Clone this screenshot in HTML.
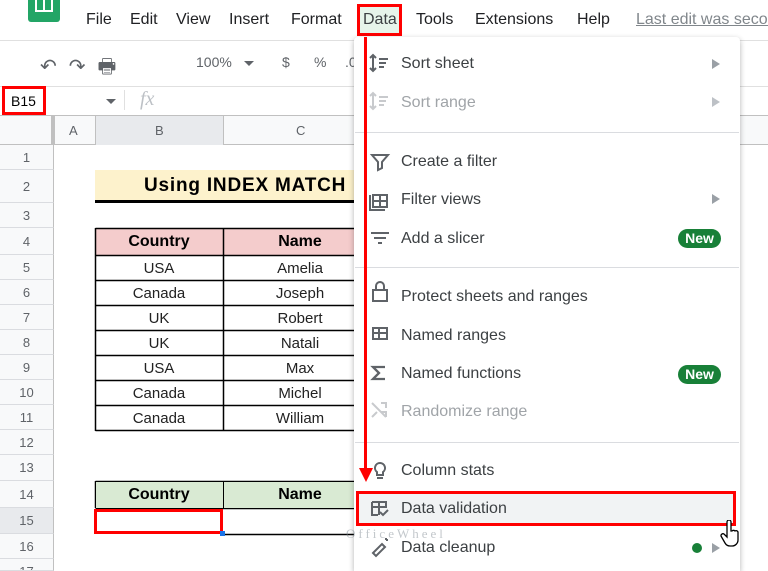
<!DOCTYPE html>
<html><head><style>
*{margin:0;padding:0;box-sizing:border-box}
html,body{width:768px;height:571px;overflow:hidden}
body{background:#fff;font-family:"Liberation Sans",Arial,sans-serif;position:relative}
.a{position:absolute}
.rh{position:absolute;left:0;width:54px;background:#f8f9fa;border-bottom:1px solid #dadce0;border-right:1px solid #c0c0c0;color:#5f6368;font-size:13px;text-align:center}
.cell{position:absolute;text-align:center;font-size:15px;color:#222}
.mi{position:absolute;left:401px;font-size:16px;color:#3c4043}
.arr{position:absolute;left:712px;width:0;height:0;border-left:8px solid #9aa0a6;border-top:5px solid transparent;border-bottom:5px solid transparent}
.new{position:absolute;left:678px;width:43px;height:19px;border-radius:10px;background:#188038;color:#fff;font-weight:bold;font-size:14px;text-align:center;line-height:19px}
.sep{position:absolute;left:355px;width:384px;height:1px;background:#dadce0}
</style></head><body>
<!-- logo -->
<div class="a" style="left:28px;top:-8px;width:32px;height:30px;background:#23a566;border-radius:3px"></div>
<div class="a" style="left:35px;top:-2px;width:18px;height:14px;border:2px solid #fff;border-top:none"></div>
<div class="a" style="left:43px;top:-2px;width:2px;height:14px;background:#fff"></div>
<div class="a" style="left:86px;top:11px;font-size:16px;color:#202124">
<span style="position:absolute;left:0">File</span><span style="position:absolute;left:44px">Edit</span><span style="position:absolute;left:90px">View</span><span style="position:absolute;left:143px">Insert</span><span style="position:absolute;left:205px">Format</span><span style="position:absolute;left:330px">Tools</span><span style="position:absolute;left:389px">Extensions</span><span style="position:absolute;left:491px">Help</span></div>
<div class="a" style="left:357px;top:4px;width:45px;height:32px;background:#e6f4ea"></div>
<div class="a" style="left:357px;top:4px;width:45px;height:32px;border:3px solid #f00"></div>
<div class="a" style="left:363px;top:11px;font-size:16px;color:#3c4043">Data</div>
<div class="a" style="left:636px;top:8px;width:132px;height:24px;overflow:hidden"><div style="padding-top:3px;font-size:16px;color:#80868b;text-decoration:underline;white-space:nowrap">Last edit was seconds ago</div></div>
<!-- toolbar -->
<div class="a" style="left:0;top:40px;width:768px;height:1px;background:#e0e0e0"></div>
<div class="a" style="left:40px;top:52px;font-size:20px;color:#5f6368;letter-spacing:12px;white-space:nowrap">↶↷🖶</div>
<div class="a" style="left:196px;top:54px;font-size:14px;color:#5f6368">100%</div>
<div class="a" style="left:244px;top:61px;border-left:5px solid transparent;border-right:5px solid transparent;border-top:5px solid #5f6368"></div>
<div class="a" style="left:282px;top:54px;font-size:14px;color:#5f6368">$</div>
<div class="a" style="left:314px;top:54px;font-size:14px;color:#5f6368">%</div>
<div class="a" style="left:345px;top:54px;font-size:14px;color:#5f6368">.0</div>
<div class="a" style="left:0;top:86px;width:768px;height:1px;background:#e0e0e0"></div>
<!-- formula bar -->
<div class="a" style="left:2px;top:86px;width:44px;height:29px;border:3px solid #f00"></div>
<div class="a" style="left:11px;top:93px;font-size:14px;color:#000">B15</div>
<div class="a" style="left:106px;top:99px;border-left:5px solid transparent;border-right:5px solid transparent;border-top:5px solid #5f6368"></div>
<div class="a" style="left:124px;top:90px;width:1px;height:20px;background:#e0e0e0"></div>
<div class="a" style="left:140px;top:88px;font-size:20px;color:#bdc1c6;font-style:italic;font-family:'Liberation Serif',serif">fx</div>
<div class="a" style="left:0;top:115px;width:768px;height:1px;background:#c0c0c0"></div>
<!-- column headers -->
<div class="a" style="left:0;top:116px;width:768px;height:29px;background:#f8f9fa;border-bottom:1px solid #c0c0c0"></div>
<div class="a" style="left:51px;top:116px;width:4px;height:29px;background:#c0c0c0"></div>
<div class="a" style="left:95px;top:116px;width:129px;height:29px;background:#e8eaed;border-left:1px solid #c0c0c0;border-right:1px solid #c0c0c0"></div>
<div class="a" style="left:69px;top:123px;font-size:13px;color:#5f6368">A</div>
<div class="a" style="left:155px;top:123px;font-size:13px;color:#5f6368">B</div>
<div class="a" style="left:296px;top:123px;font-size:13px;color:#5f6368">C</div>
<!-- row headers -->
<div class="rh" style="top:145px;height:25px;line-height:25px">1</div>
<div class="rh" style="top:170px;height:33px;line-height:33px">2</div>
<div class="rh" style="top:203px;height:25px;line-height:25px">3</div>
<div class="rh" style="top:228px;height:27px;line-height:27px">4</div>
<div class="rh" style="top:255px;height:25px;line-height:25px">5</div>
<div class="rh" style="top:280px;height:25px;line-height:25px">6</div>
<div class="rh" style="top:305px;height:25px;line-height:25px">7</div>
<div class="rh" style="top:330px;height:25px;line-height:25px">8</div>
<div class="rh" style="top:355px;height:25px;line-height:25px">9</div>
<div class="rh" style="top:380px;height:25px;line-height:25px">10</div>
<div class="rh" style="top:405px;height:25px;line-height:25px">11</div>
<div class="rh" style="top:430px;height:25px;line-height:25px">12</div>
<div class="rh" style="top:455px;height:26px;line-height:26px">13</div>
<div class="rh" style="top:481px;height:27px;line-height:27px">14</div>
<div class="rh" style="top:508px;height:26px;line-height:26px;background:#e8eaed">15</div>
<div class="rh" style="top:534px;height:25px;line-height:25px">16</div>
<div class="rh" style="top:559px;height:12px;line-height:25px;overflow:hidden">17</div>
<!-- title -->
<div class="a" style="left:95px;top:170px;width:260px;height:31px;background:#fdf2cc"></div>
<div class="a" style="left:95px;top:200px;width:260px;height:3px;background:#000"></div>
<div class="a" style="left:144px;top:175px;width:211px;overflow:hidden;font-size:19px;letter-spacing:0.8px;font-weight:bold;color:#000;white-space:nowrap">Using INDEX MATCH</div>
<!-- table 1 -->
<div class="a" style="left:95px;top:228px;width:260px;height:27px;background:#f4cccc"></div>
<svg class="a" style="left:0;top:0" width="360" height="571">
<g stroke="#000" stroke-width="1.5" fill="none">
<path d="M95.5 228.5H360M95.5 255.5H360M95.5 280.5H360M95.5 305.5H360M95.5 330.5H360M95.5 355.5H360M95.5 380.5H360M95.5 405.5H360M95.5 430.5H360M95.5 228V431M223.5 228V431"/>
<path d="M95.5 481.5H360M95.5 508.5H360M95.5 481V508M223.5 481V508M223 534.5H355"/>
</g></svg>
<div class="cell" style="left:95px;top:233px;width:128px;font-weight:bold;font-size:16px;color:#000">Country</div>
<div class="cell" style="left:224px;top:233px;width:152px;font-weight:bold;font-size:16px;color:#000">Name</div>
<div class="cell" style="left:95px;top:260px;width:128px">USA</div><div class="cell" style="left:224px;top:260px;width:152px">Amelia</div>
<div class="cell" style="left:95px;top:285px;width:128px">Canada</div><div class="cell" style="left:224px;top:285px;width:152px">Joseph</div>
<div class="cell" style="left:95px;top:310px;width:128px">UK</div><div class="cell" style="left:224px;top:310px;width:152px">Robert</div>
<div class="cell" style="left:95px;top:335px;width:128px">UK</div><div class="cell" style="left:224px;top:335px;width:152px">Natali</div>
<div class="cell" style="left:95px;top:360px;width:128px">USA</div><div class="cell" style="left:224px;top:360px;width:152px">Max</div>
<div class="cell" style="left:95px;top:385px;width:128px">Canada</div><div class="cell" style="left:224px;top:385px;width:152px">Michel</div>
<div class="cell" style="left:95px;top:410px;width:128px">Canada</div><div class="cell" style="left:224px;top:410px;width:152px">William</div>
<!-- table 2 -->
<div class="a" style="left:96px;top:482px;width:259px;height:26px;background:#d9ead3"></div>
<div class="a" style="left:223px;top:482px;width:1px;height:26px;background:#000"></div>
<div class="cell" style="left:95px;top:486px;width:128px;font-weight:bold;font-size:16px;color:#000">Country</div>
<div class="cell" style="left:224px;top:486px;width:152px;font-weight:bold;font-size:16px;color:#000">Name</div>
<div class="a" style="left:94px;top:509px;width:129px;height:25px;border:3px solid #f00"></div>
<div class="a" style="left:220px;top:531px;width:5px;height:5px;background:#1a73e8"></div>
<!-- menu -->
<div class="a" style="left:354px;top:37px;width:386px;height:534px;background:#fff;box-shadow:0 2px 6px rgba(0,0,0,.3);border-radius:4px 4px 0 0"></div>
<div class="mi" style="top:55px">Sort sheet</div><div class="arr" style="top:59px"></div>
<div class="mi" style="top:94px;color:#a0a4a8">Sort range</div><div class="arr" style="top:97px;border-left-color:#bdc1c6"></div>
<div class="sep" style="top:132px"></div>
<div class="mi" style="top:153px">Create a filter</div>
<div class="mi" style="top:191px">Filter views</div><div class="arr" style="top:194px"></div>
<div class="mi" style="top:230px">Add a slicer</div><div class="new" style="top:229px">New</div>
<div class="sep" style="top:267px"></div>
<div class="mi" style="top:288px">Protect sheets and ranges</div>
<div class="mi" style="top:327px">Named ranges</div>
<div class="mi" style="top:365px">Named functions</div><div class="new" style="top:365px">New</div>
<div class="mi" style="top:403px;color:#a0a4a8">Randomize range</div>
<div class="sep" style="top:442px"></div>
<div class="mi" style="top:462px">Column stats</div>
<div class="a" style="left:356px;top:491px;width:380px;height:35px;background:#f1f3f4;border:3px solid #f00"></div>
<div class="mi" style="top:500px">Data validation</div>
<div class="mi" style="top:539px">Data cleanup</div>
<div class="a" style="left:692px;top:543px;width:10px;height:10px;border-radius:50%;background:#188038"></div>
<div class="arr" style="top:543px"></div>
<!-- icons -->
<svg class="a" style="left:368px;top:50px" width="26" height="510" fill="none" stroke="#5f6368" stroke-width="2">
<path d="M5 5v16M2 8l3-3 3 3M2 18l3 3 3-3M11 9h9M11 13h7M11 17h5"/>
<path d="M5 43v16M2 46l3-3 3 3M2 56l3 3 3-3M11 47h9M11 51h7M11 55h5" stroke="#c8cacd"/>
<path d="M4 105h16l-6 7v6l-4 2v-8z"/>
<rect x="5" y="145" width="14" height="12"/><path d="M2 145v15h15M5 151h14M12 145v12"/>
<path d="M3 183h18M6 188h12M10 193h4"/>
<rect x="5" y="240" width="14" height="11"/><path d="M8 240v-4a4 4 0 0 1 8 0v4"/>
<rect x="5" y="278" width="14" height="11"/><path d="M5 283h14M11 283v6M5 278h6v5"/>
<path d="M17 317H5l6 6-6 6h12" stroke-width="2.3"/>
<path d="M4 353l14 14M4 367l5-5M13 353h5v5M18 367v-5h-5" stroke="#c8cacd"/>
<path d="M12 413a5 5 0 0 0-3 9v3h6v-3a5 5 0 0 0-3-9zM9 428h6"/>
<path d="M4 452h14v6M4 452v13h6M4 457h14M11 452v13M12 462l3 3 5-5"/>
<path d="M5 503l9-9 3 3-9 9zM18 488v2M20 490h-2"/>
</svg>
<!-- red arrow -->
<div class="a" style="left:364px;top:37px;width:3px;height:435px;background:#f00"></div>
<div class="a" style="left:359px;top:468px;border-left:7px solid transparent;border-right:7px solid transparent;border-top:14px solid #f00"></div>
<!-- cursor -->
<svg class="a" style="left:720px;top:520px" width="22" height="28" fill="#fff" stroke="#000" stroke-width="1.3"><path d="M7 2a2 2 0 0 1 4 0v9h1a2 2 0 0 1 3 0a2 2 0 0 1 3 1v8a6 6 0 0 1-6 6h-2a6 6 0 0 1-5-3l-4-7a2 2 0 0 1 3-2l3 3z"/></svg>
<!-- watermark -->
<div class="a" style="left:346px;top:526px;font-size:13px;letter-spacing:3px;color:rgba(120,130,140,.45);font-family:'Liberation Serif',serif">OfficeWheel</div>
</body></html>
